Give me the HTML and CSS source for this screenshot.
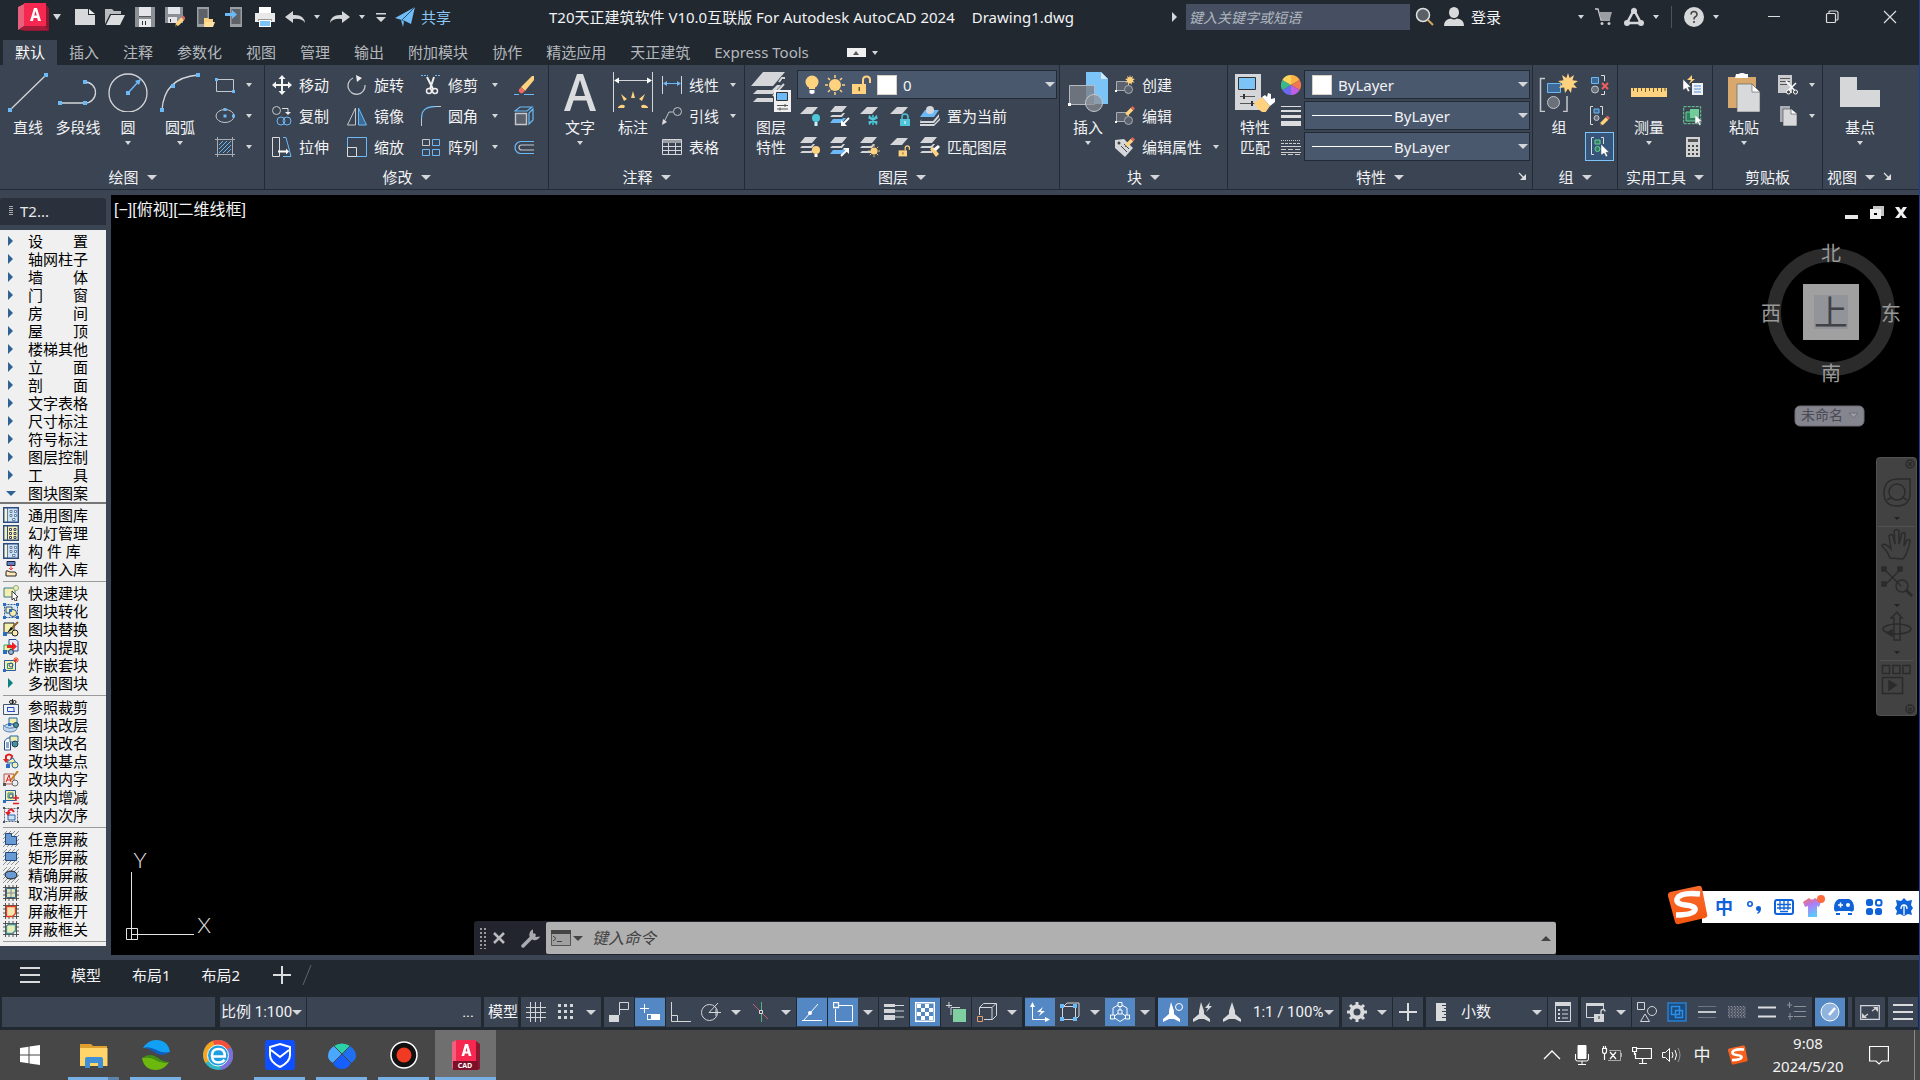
FILE: index.html
```html
<!DOCTYPE html>
<html lang="zh-CN">
<head>
<meta charset="utf-8">
<title>T20天正建筑软件 V10.0互联版</title>
<link rel="stylesheet" href="styles.css">
</head>
<body>
<svg class="defs" aria-hidden="true">
<defs>
<linearGradient id="shirtg" x1="0" y1="0" x2="0.4" y2="1"><stop offset="0" stop-color="#ff6a4a"/><stop offset=".45" stop-color="#b07cf5"/><stop offset="1" stop-color="#5cc8ff"/></linearGradient>
<linearGradient id="sog" x1="0" y1="0" x2="0" y2="1"><stop offset="0" stop-color="#f96a2c"/><stop offset="1" stop-color="#f4560f"/></linearGradient>
</defs>
<symbol id="logo" viewBox="0 0 32 30"><path d="M0 5L8 1v22l-8 5z" fill="#e8607c"/><path d="M4 28l3-5h20V2l4 4v22q0 1-1 1H6z" fill="#8c1730"/><path d="M6 1h22v23H6z" fill="#f7284f"/><path d="M6 24h21l3 4H1z" fill="#a51c3a"/><path d="M12 19L16 6h3l4 13h-3l-.8-3h-3.600L15 19zM16.200 13.500h2.600L17.500 9z" fill="#fff"/></symbol>
<symbol id="new" viewBox="0 0 20 20"><path d="M0 2h13v6h7v10H0z" fill="#d6d8da"/><path d="M14 2l6 5h-6z" fill="#eee"/></symbol>
<symbol id="open" viewBox="0 0 20 20"><path d="M0 2h7l2 2h7v3H5L0 17z" fill="#b9bbbd"/><path d="M6 8h14l-5 10H1z" fill="#dcdddf"/></symbol>
<symbol id="save" viewBox="0 0 20 20"><path d="M0 0h20v20H0z" fill="#8b8f96"/><path d="M4 0h12v9H4z" fill="#e3e5e8"/><path d="M4 12h12v8H4z" fill="#e9eaec"/><path d="M7 14h1v4H7zM10 14h1v4h-1z" fill="#333"/><path d="M4 9h12v1H4z" fill="#555"/></symbol>
<symbol id="pencil" viewBox="0 0 12 12"><path d="M0 12l1-4 6-6 3 3-6 6z" fill="#ffd27f"/><path d="M7 2l2-2 3 3-2 2z" fill="#e0655a"/><path d="M0 12l.7-2.500L2.500 11.300z" fill="#333"/></symbol>
<symbol id="saveas" viewBox="0 0 20 20"><path d="M0 0h18v16H0z" fill="#8b8f96"/><path d="M3 0h12v7H3zM3 10h9v6H3z" fill="#e3e5e8"/><path d="M5 12h1v3H5z" fill="#333"/><use href="#pencil" x="10" y="8" width="11" height="12"/></symbol>
<symbol id="mopen" viewBox="0 0 20 20"><path d="M2 0h12v20H2z" fill="#9a9da2"/><path d="M3.500 2h9v15h-9z" fill="#5d6168"/><path d="M9 11h4l1 1h4v7H9z" fill="#ffd27f"/><path d="M11 15h9l-2 5H9z" fill="#ffe0a0"/></symbol>
<symbol id="msave" viewBox="0 0 20 20"><path d="M5 0h12v20H5z" fill="#9a9da2"/><path d="M6.500 2h9v15h-9z" fill="#5d6168"/><path d="M0 6h7V3l5 4.500L7 12V9H0z" fill="#6cb9f7"/></symbol>
<symbol id="print" viewBox="0 0 20 20"><path d="M4 0h12v6H4z" fill="#fff"/><path d="M0 6h20v9H0z" fill="#e8e8e8"/><path d="M3 12h14v2H3z" fill="#999"/><path d="M4 13h12v7H4z" fill="#fff"/><path d="M5 14h10v5H5z" fill="#7cc3f8"/></symbol>
<symbol id="undo" viewBox="0 0 20 20"><path d="M0 10L8 4v4q11-1 12 8-3-5-12-4v4z" fill="#d4d6d9"/></symbol>
<symbol id="redo" viewBox="0 0 20 20"><path d="M20 10L12 4v4Q1 7 0 16q3-5 12-4v4z" fill="#d4d6d9"/></symbol>
<symbol id="qmore" viewBox="0 0 12 12"><path d="M1 2h10v1.500H1zM1 6h10L6 11z" fill="#d4d6d9"/></symbol>
<symbol id="share" viewBox="0 0 20 20"><path d="M0 11L20 0 16 17l-6-3zM6 13l3 1.500L8 20z" fill="#70bdf8"/><path d="M20 0L7 13" stroke="#2b4f70"/></symbol>
<symbol id="search" viewBox="0 0 20 20"><circle cx="8" cy="8" r="6.500" fill="#5a6068" stroke="#e0e0e0" stroke-width="1.500"/><path d="M13 13l5 5" stroke="#d9a75c" stroke-width="2"/></symbol>
<symbol id="user" viewBox="0 0 20 20"><ellipse cx="10" cy="5.500" rx="5" ry="5.500" fill="#d8dadc"/><path d="M0 19q0-7 7-7.500 3 2 6 0 7 .5 7 7.500z" fill="#d8dadc"/></symbol>
<symbol id="cart" viewBox="0 0 18 18"><path d="M0 1h3l3 11h9" fill="none" stroke="#c9cbce" stroke-width="1.300"/><path d="M4 4h13l-2 7H6z" fill="#9a9da2"/><circle cx="7" cy="15.500" r="1.500" fill="#ccc"/><circle cx="14" cy="15.500" r="1.500" fill="#ccc"/></symbol>
<symbol id="tri" viewBox="0 0 20 20"><path d="M10 3l7 13H3z" fill="none" stroke="#d4d6d9" stroke-width="2.500"/><circle cx="10" cy="4" r="3" fill="#d4d6d9"/><circle cx="3" cy="16" r="3" fill="#d4d6d9"/><circle cx="17" cy="16" r="3" fill="#d4d6d9"/></symbol>
<symbol id="help" viewBox="0 0 20 20"><circle cx="10" cy="10" r="10" fill="#d6d8da"/><path d="M7 7.500q0-3 3-3t3 3q0 1.500-2 2.500-1 .7-1 2.500" fill="none" stroke="#444" stroke-width="1.600"/><circle cx="10" cy="15" r="1.100" fill="#444"/></symbol>
<symbol id="wmin" viewBox="0 0 14 14"><path d="M1 6.500h12" stroke="#ddd"/></symbol>
<symbol id="wres" viewBox="0 0 14 14"><path d="M1.500 4.500q0-1 1-1h7q1 0 1 1v7q0 1-1 1h-7q-1 0-1-1zM4 3V2q0-1 1-1h6q2 0 2 2v6q0 1-1 1h-1" fill="none" stroke="#ddd" stroke-width="1.200"/></symbol>
<symbol id="wclose" viewBox="0 0 14 14"><path d="M1 1l12 12M13 1L1 13" stroke="#ddd" stroke-width="1.200"/></symbol>

<symbol id="line" viewBox="0 0 40 40"><path d="M2 38L38 3" stroke="#d4d6d9" stroke-width="1.300"/><path d="M0 36h4v4H0zM36 1h4v4h-4z" fill="#6cb9f7"/></symbol>
<symbol id="pline" viewBox="0 0 40 40"><path d="M2 31h25a10.500 10.500 0 0 0 0-21" fill="none" stroke="#d4d6d9" stroke-width="1.300"/><path d="M0 29h4v4H0zM25 29h4v4h-4zM25 8h4v4h-4z" fill="#6cb9f7"/></symbol>
<symbol id="circle" viewBox="0 0 40 40"><circle cx="20" cy="21" r="19" fill="none" stroke="#d4d6d9" stroke-width="1.300"/><path d="M20 21l10-11" stroke="#6cb9f7" stroke-width="1.500"/><path d="M18 19h4v4h-4zM27 9l6-2-2 6z" fill="#6cb9f7"/></symbol>
<symbol id="arc" viewBox="0 0 40 40"><path d="M2 38Q4 6 38 3" fill="none" stroke="#d4d6d9" stroke-width="1.300"/><path d="M0 36h4v4H0zM11 12h4v4h-4zM36 1h4v4h-4z" fill="#6cb9f7"/></symbol>
<symbol id="rect" viewBox="0 0 20 20"><path d="M1.500 4.500h17v12h-17z" fill="none" stroke="#c4c7cb"/><path d="M0 3h3v3H0zM17 15h3v3h-3z" fill="#6cb9f7"/></symbol>
<symbol id="ellipse" viewBox="0 0 20 20"><ellipse cx="10" cy="10" rx="9" ry="6.500" fill="none" stroke="#c4c7cb"/><path d="M8.500 2h3v3h-3zM8.500 8.500h3v3h-3zM17 8.500h3v3h-3z" fill="#6cb9f7"/></symbol>
<symbol id="hatch" viewBox="0 0 20 20"><path d="M0 2.500h20M0 17.500h20M2.500 0v20M17.500 0v20" stroke="#a9adb3"/><path d="M4 8l4-4M4 12l8-8M4 16L16 4M8 16l8-8M12 16l4-4" stroke="#6cb9f7"/></symbol>
<symbol id="move" viewBox="0 0 20 20"><path d="M10 0l3.500 4H11v5h5V6.500L20 10l-4 3.500V11h-5v5h2.500L10 20l-3.500-4H9v-5H4v2.500L0 10l4-3.500V9h5V4H6.500z" fill="#f4f4f4"/></symbol>
<symbol id="copy" viewBox="0 0 20 20"><circle cx="4.500" cy="4.500" r="4" fill="none" stroke="#c4c7cb"/><path d="M10 2.500h6v4" fill="none" stroke="#ddd"/><path d="M13 6h6l-3 3z" fill="#eee"/><circle cx="9" cy="15" r="4" fill="none" stroke="#6cb9f7"/><circle cx="15" cy="15" r="4" fill="none" stroke="#6cb9f7"/></symbol>
<symbol id="stretch" viewBox="0 0 20 20"><path d="M.5 19.500V.5h7v19z" fill="none" stroke="#ddd"/><path d="M11 .5h3l5 19H11" fill="none" stroke="#6cb9f7"/><path d="M6 13.500h8v-2l3 3-3 3v-2H6z" fill="#fff"/></symbol>
<symbol id="rotate" viewBox="0 0 20 20"><path d="M6 3a8.500 8.500 0 1 0 12 7" fill="none" stroke="#c4c7cb" stroke-width="1.300"/><path d="M9 0l6 3-5 4z" fill="#eee"/></symbol>
<symbol id="mirror" viewBox="0 0 20 20"><path d="M8.500 2v17h-8z" fill="none" stroke="#c4c7cb"/><path d="M11.500 2v17h8z" fill="#3c6c96" stroke="#6cb9f7"/></symbol>
<symbol id="scale" viewBox="0 0 20 20"><path d="M.5.500h19v19H.5z" fill="none" stroke="#6cb9f7"/><path d="M.5 10.500h9v9h-9z" fill="#3b4453" stroke="#ddd"/></symbol>
<symbol id="trim" viewBox="0 0 20 20"><path d="M0 .5h7M14 .5h6" stroke="#6cb9f7" stroke-dasharray="2 1"/><path d="M6 2l6 12M13 2L9 14" stroke="#eee" stroke-width="2"/><circle cx="8" cy="16" r="2.500" fill="none" stroke="#eee" stroke-width="1.500"/><circle cx="14" cy="16" r="2.500" fill="none" stroke="#eee" stroke-width="1.500"/></symbol>
<symbol id="fillet" viewBox="0 0 20 20"><path d="M.5 10v10M12 .5h8" stroke="#c4c7cb"/><path d="M.5 12Q.5.500 14 .5" fill="none" stroke="#6cb9f7" stroke-width="1.300"/></symbol>
<symbol id="array" viewBox="0 0 20 20"><path d="M1.500 2.500h7v6h-7z" fill="none" stroke="#c4c7cb"/><path d="M11.500 2.500h7v6h-7zM1.500 12.500h7v6h-7zM11.500 12.500h7v6h-7z" fill="none" stroke="#6cb9f7"/></symbol>
<symbol id="erase" viewBox="0 0 20 20"><path d="M0 19.500h5M10 19.500h10" stroke="#6cb9f7"/><path d="M7 12L18 1h2v4L11 16z" fill="#ffd27f"/><path d="M7 12l4 4-3 2.500q-4-1-3-4z" fill="#f06a62"/></symbol>
<symbol id="explode" viewBox="0 0 20 20"><path d="M1.500 7.500h11v11h-11z" fill="#5b626e" stroke="#c4c7cb" stroke-width="1.400"/><path d="M1 5l5-4h12l-5 4zM15 7l4-4v11l-4 4z" fill="none" stroke="#6cb9f7" stroke-width="1.200"/></symbol>
<symbol id="offset" viewBox="0 0 20 20"><path d="M20 4.500H7a6 6 0 0 0 0 12h13" fill="none" stroke="#6cb9f7" stroke-width="1.200"/><path d="M20 8H7.500a2.500 2.500 0 0 0 0 5H20" fill="none" stroke="#c4c7cb" stroke-width="1.200"/></symbol>
<symbol id="bigA" viewBox="0 0 40 40"><path d="M4 39L17 2h6l13 37h-6l-3.500-10.500h-13L10 39zM15 24h10L20 8z" fill="#dadcde"/></symbol>
<symbol id="dim" viewBox="0 0 40 40"><path d="M.5 0v40M39.500 0v40M2 8.500h36" stroke="#d4d6d9"/><path d="M1 8.500l5-3v6zM39 8.500l-5-3v6z" fill="#fff"/><path d="M18 26l2-7 2 7zM11 29l-3-7 6 5zM29 29l3-7-6 5zM5 35q4-4 7-1l-1 2H5zM35 35q-4-4-7-1l1 2h6z" fill="#ffd27f"/></symbol>
<symbol id="linear" viewBox="0 0 20 20"><path d="M.5 1v18M19.500 1v18" stroke="#d4d6d9"/><path d="M2 8.500h16" stroke="#6cb9f7"/><path d="M1 8.500l4-2.500v5zM19 8.500L15 6v5z" fill="#6cb9f7"/></symbol>
<symbol id="leader" viewBox="0 0 20 20"><circle cx="15.500" cy="5.500" r="4" fill="none" stroke="#c4c7cb"/><path d="M11 6H7l-5 10" fill="none" stroke="#c4c7cb"/><path d="M0 19l1-6 4 3z" fill="#ddd"/></symbol>
<symbol id="table" viewBox="0 0 20 20"><path d="M.5 2.500h19v15H.5z" fill="none" stroke="#d4d6d9"/><path d="M1 3h18v3H1z" fill="#999da4"/><path d="M0 9.500h20M0 13.500h20M6.500 6v12M13.500 6v12" stroke="#d4d6d9"/></symbol>

<symbol id="ly1" viewBox="0 0 20 20"><path d="M7 1h11l-6 7H0z" fill="#d4d6d9"/></symbol>
<symbol id="ly3" viewBox="0 0 20 20"><path d="M5 0h12l-5 6H0zM2 9l-2 2h12l3-4h-2l-2 2zM2 14l-2 2h12l3-4h-2l-2 2z" fill="#d4d6d9"/></symbol>
<symbol id="ly3b" viewBox="0 0 20 20"><path d="M5 0h12l-5 6H0zM2 9l-2 2h12l3-4h-2l-2 2z" fill="#d4d6d9"/><path d="M3 13l-3 4h12l4-5h-3l-1 1z" fill="#6cb9f7"/></symbol>
<symbol id="bulb" viewBox="0 0 14 20"><circle cx="7" cy="7" r="6.500" fill="#ffd27f"/><path d="M4 12h6v2H4z" fill="#ffd27f"/><path d="M4.500 15h5v3q-2.500 2-5 0z" fill="#fff"/></symbol>
<symbol id="sun" viewBox="0 0 20 20"><circle cx="10" cy="10" r="6" fill="#ffd27f"/><path d="M10 0v3M10 17v3M0 10h3M17 10h3M3 3l2 2M15 15l2 2M17 3l-2 2M5 15l-2 2" stroke="#ffd27f" stroke-width="1.500"/></symbol>
<symbol id="unlock" viewBox="0 0 20 20"><path d="M1 9h14v10H1z" fill="#ffd27f"/><path d="M12 9V5q0-3.500 3.500-3.500T19 5v3" fill="none" stroke="#ffd27f" stroke-width="2"/><path d="M7.500 12h1.500v4H7.500z" fill="#6b5a30"/></symbol>
<symbol id="layprop" viewBox="0 0 40 40"><path d="M12 0h22L22 14H0zM6 18l-4 4h20l8-9h-4l-5 5zM6 26l-4 4h20v-4z" fill="#d4d6d9"/><path d="M34 6h-3l-3 4M33 12L22 24" stroke="#d4d6d9" stroke-width="2"/><path d="M23 18h17v22H23z" fill="#f0f0f0"/><path d="M25.500 20.500h11v8h-11z" fill="#6cb9f7" stroke="#333"/><path d="M26 33.500h11M26 37h11M34 32v3M29 35.500v3" stroke="#555"/></symbol>
<symbol id="lyoff" viewBox="0 0 20 20"><use href="#ly1"/><circle cx="16" cy="12" r="4" fill="#4ec5d8"/><path d="M14.500 16h3v4h-3z" fill="#c9f0f5"/></symbol>
<symbol id="lyiso" viewBox="0 0 20 20"><use href="#ly3b"/><path d="M11 20v-6l6 6z" fill="#fff"/><path d="M19 12l-6 6" stroke="#fff" stroke-width="2"/></symbol>
<symbol id="lyfrz" viewBox="0 0 20 20"><use href="#ly1"/><path d="M13 9v10M8.500 11.500l9 5M17.500 11.500l-9 5M9 9.500l8 9M17 9.500l-8 9" stroke="#4ec5d8" stroke-width="1.500"/></symbol>
<symbol id="lylock" viewBox="0 0 20 20"><use href="#ly1"/><path d="M10 13h10v7H10z" fill="#4ec5d8"/><path d="M12 13v-2q0-3 3-3t3 3v2" fill="none" stroke="#4ec5d8" stroke-width="1.500"/><path d="M14.500 15h1v3h-1z" fill="#fff"/></symbol>
<symbol id="lycur" viewBox="0 0 20 20"><path d="M5 4h14l-5 7H0z" fill="#6cb9f7"/><circle cx="10" cy="4" r="4" fill="#d4d6d9"/><path d="M2 13l-2 2h13l6-7v3l-5 6H0v-1l2-3M0 20h14l6-6v-2l-6 6H0z" fill="#d4d6d9"/></symbol>
<symbol id="lyon" viewBox="0 0 20 20"><use href="#ly3"/><circle cx="16" cy="13" r="4" fill="#ffd27f"/><path d="M14.500 17h3v3h-3z" fill="#fff"/></symbol>
<symbol id="lyun" viewBox="0 0 20 20"><use href="#ly3b"/><path d="M11 19l6-6" stroke="#fff" stroke-width="2"/><path d="M13 11h6v6z" fill="#fff"/></symbol>
<symbol id="lythaw" viewBox="0 0 20 20"><use href="#ly3"/><use href="#sun" x="8" y="8" width="12" height="12"/></symbol>
<symbol id="lyunl" viewBox="0 0 20 20"><use href="#ly1"/><use href="#unlock" x="8" y="8" width="12" height="12"/></symbol>
<symbol id="lymat" viewBox="0 0 20 20"><use href="#ly3"/><path d="M10 12l3-2 6 7-3 3z" fill="#ffd27f"/><path d="M13 12l5-4 2 2-4 4z" fill="#fff"/></symbol>

<symbol id="insert" viewBox="0 0 40 40"><path d="M18 0h15l7 7v25H18z" fill="#7cc3f8"/><path d="M33 0v7h7z" fill="#cfe8fc"/><path d="M1.500 13.500h25v19h-25z" fill="#7a7f87" fill-opacity=".8" stroke="#b6b9be"/><circle cx="26" cy="31" r="8.500" fill="#8b8f96" fill-opacity=".7" stroke="#c4c7cb"/><path d="M0 31h3v3H0z" fill="#fff"/></symbol>
<symbol id="blk" viewBox="0 0 20 20"><path d="M1.500 6.500h12v9h-12z" fill="#5b626e" stroke="#a9adb3"/><circle cx="13.500" cy="14.500" r="4" fill="#5b626e" stroke="#a9adb3"/><path d="M0 15h2v2H0z" fill="#fff"/></symbol>
<symbol id="star" viewBox="0 0 20 20"><path d="M10 0l1.600 5L16 2l-1.500 5.200L20 8l-4.500 3 3.500 4-5.200-.6L13 20l-3-4.300L7 20l-.8-5.600L1 15l3.500-4L0 8l5.500-.8L4 2l4.400 3z" fill="#ffd27f"/></symbol>
<symbol id="bcreate" viewBox="0 0 20 20"><use href="#blk"/><use href="#star" x="10" y="0" width="10" height="10"/></symbol>
<symbol id="bedit" viewBox="0 0 20 20"><use href="#blk"/><use href="#pencil" x="10" y="0" width="10" height="10"/></symbol>
<symbol id="battr" viewBox="0 0 20 20"><path d="M0 3l9-1 9 9-8 9L0 11z" fill="#d4d6d9"/><circle cx="4" cy="6" r="1.500" fill="#444"/><path d="M6 9l6 6M9 7l5 5" stroke="#444"/><use href="#pencil" x="10" y="0" width="10" height="10"/></symbol>
<symbol id="match" viewBox="0 0 40 40"><path d="M0 2h26v36H0z" fill="#d4d6d9"/><path d="M3.500 5.500h17v12h-17z" fill="#7cc3f8" stroke="#333"/><path d="M5 24.500h15M5 31.500h15" stroke="#555"/><path d="M8 22h2v5H8zM16 29h2v5h-2z" fill="#333"/><path d="M19 31l8-6 8 9-5 7q-6-1-11-10z" fill="#ffd27f"/><path d="M27 25l3-2 2 2 1-4 3 1v5l4-1v4l-5 4z" fill="#fff"/></symbol>
<symbol id="wheel" viewBox="0 0 20 20"><path d="M10 10V0a10 10 0 0 1 8.700 5z" fill="#ffb347"/><path d="M10 10L18.700 5a10 10 0 0 1 0 10z" fill="#f07850"/><path d="M10 10l8.700 5A10 10 0 0 1 10 20z" fill="#c060e0"/><path d="M10 10v10a10 10 0 0 1-8.700-5z" fill="#6a6af0"/><path d="M10 10l-8.700 5a10 10 0 0 1 0-10z" fill="#3cb88a"/><path d="M10 10L1.300 5A10 10 0 0 1 10 0z" fill="#ffd75e"/></symbol>
<symbol id="lwt" viewBox="0 0 20 20"><path d="M0 0h20v1H0zM0 4h20v2H0zM0 9h20v3H0zM0 15h20v5H0z" fill="#dcdddf"/></symbol>
<symbol id="ltp" viewBox="0 0 20 20"><path d="M0 3.500h20" stroke="#ccc" stroke-dasharray="1 1"/><path d="M0 6.500h20" stroke="#ccc" stroke-dasharray="3 1"/><path d="M0 9.500h20M0 15.500h20" stroke="#ccc"/><path d="M0 12.500h20M0 17.500h20" stroke="#ccc" stroke-dasharray="5 2"/></symbol>
<symbol id="launch" viewBox="0 0 10 10"><path d="M1 1l5 5" stroke="#ddd" stroke-width="1.300"/><path d="M8 2v6H2z" fill="#ddd"/></symbol>
<symbol id="group" viewBox="0 0 40 40"><path d="M6 6.500H1.500v33H6M24 39.500h4V24" fill="none" stroke="#c4c7cb" stroke-width="1.500"/><path d="M8.500 11.500h13v9h-13z" fill="#3d6a96" stroke="#6cb9f7"/><circle cx="14.500" cy="30.500" r="6" fill="#6b717b" stroke="#c4c7cb"/><use href="#star" x="19" y="1" width="20" height="20"/></symbol>
<symbol id="ungrp" viewBox="0 0 20 20"><path d="M1.500 2.500h7v6h-7z" fill="#3d6a96" stroke="#6cb9f7"/><circle cx="5" cy="14.500" r="3.500" fill="#6b717b" stroke="#c4c7cb"/><path d="M11 .5h3.500V6M14.500 16v3.500H11" fill="none" stroke="#ddd"/><path d="M12 8l6 6M18 8l-6 6" stroke="#f0605a" stroke-width="2"/></symbol>
<symbol id="gedit" viewBox="0 0 20 20"><path d="M3 .5H.5v18H3M10 .5h2.500V9" fill="none" stroke="#ddd"/><path d="M4 3h5v4H4z" fill="#3d6a96" stroke="#6cb9f7"/><circle cx="6.500" cy="12" r="2.500" fill="#6b717b" stroke="#c4c7cb"/><use href="#pencil" x="10" y="9" width="10" height="11"/></symbol>
<symbol id="cursor" viewBox="0 0 10 14"><path d="M0 0l9 9H5.500l2 4-2 1-2-4L0 12z" fill="#fff" stroke="#445" stroke-width=".5"/></symbol>
<symbol id="gsel" viewBox="0 0 20 20"><path d="M4 .5H1.500v17H4M11 .5h2.500V7" fill="none" stroke="#ddd"/><path d="M5 3h5v4H5z" fill="#2e7f62" stroke="#6fcf97"/><circle cx="7.500" cy="12" r="2.500" fill="#2e7f62" stroke="#6fcf97"/><use href="#cursor" x="11" y="7" width="9" height="13"/></symbol>
<symbol id="ruler" viewBox="0 0 40 40"><path d="M2 16h36v9H2z" fill="#ffd27f"/><path d="M4.500 16v3M8.500 16v4M12.500 16v3M16.500 16v4M20.500 16v3M24.500 16v4M28.500 16v3M32.500 16v4M36 16v3" stroke="#6b5a30"/></symbol>
<symbol id="qsel" viewBox="0 0 20 20"><path d="M9 0L4 5h4L6 9l6-5H9z" fill="#ffd27f"/><path d="M9 8h11v12H9z" fill="#f0f0f0"/><path d="M11 11h7M11 14h7M11 17h7" stroke="#4a90e2"/><use href="#cursor" x="0" y="4" width="9" height="13"/></symbol>
<symbol id="sall" viewBox="0 0 20 20"><path d="M.7.700h17v17H.7z" fill="none" stroke="#6fcf97" stroke-dasharray="3 1"/><path d="M3 6h10v9H3z" fill="#2e7f62" stroke="#6fcf97"/><path d="M7 3h9v9H7z" fill="#6fcf97"/><use href="#cursor" x="12" y="8" width="8" height="12"/></symbol>
<symbol id="calc" viewBox="0 0 20 20"><path d="M3 0h14v20H3z" fill="#d0d2d4"/><path d="M5 2h10v3H5z" fill="#555"/><path d="M5 8h2v2H5zM9 8h2v2H9zM13 8h2v2h-2zM5 12h2v2H5zM9 12h2v2H9zM13 12h2v2h-2zM5 16h2v2H5zM9 16h2v2H9zM13 16h2v2h-2z" fill="#444"/></symbol>
<symbol id="paste" viewBox="0 0 40 40"><path d="M4 5h28v31H4z" fill="#d9a86c"/><path d="M12 2h3q0-1 3-1t3 1h3v4H11z" fill="#fff"/><path d="M13 12h15l8 8v20H13z" fill="#d8d9db" stroke="#555" stroke-width=".6"/><path d="M28 12v8h8z" fill="#fff" stroke="#555" stroke-width=".6"/></symbol>
<symbol id="cut" viewBox="0 0 20 20"><path d="M0 0h14v18H0z" fill="#c9cbce"/><path d="M2 3.500h10M2 6.500h10M2 9.500h7" stroke="#555"/><path d="M8 6l9 10M18 8l-8 8" stroke="#fff" stroke-width="1.500"/><circle cx="10.500" cy="17" r="2" fill="#444" stroke="#fff"/><circle cx="17.500" cy="17" r="2" fill="#444" stroke="#fff"/></symbol>
<symbol id="cpy" viewBox="0 0 20 20"><path d="M2 0h10v16H2z" fill="#a9adb3"/><path d="M5 3h8l6 5v12H5z" fill="#d8d9db" stroke="#444" stroke-width=".6"/><path d="M13 3v5h6" fill="#fff" stroke="#444" stroke-width=".6"/></symbol>
<symbol id="base" viewBox="0 0 40 40"><path d="M0 5h17v13h23v17H0z" fill="#d6d7d9"/></symbol>

<symbol id="s-r" viewBox="0 0 16 16"><path d="M5 3v10l5-5z" fill="#2f6294"/></symbol>
<symbol id="s-d" viewBox="0 0 16 16"><path d="M3 6h10l-5 5z" fill="#2f6294"/></symbol>
<symbol id="s-g" viewBox="0 0 16 16"><path d="M5 3v10l5-5z" fill="#0f8080"/></symbol>
<symbol id="s-lib" viewBox="0 0 16 16"><path d="M.7.700h14.600v14.600H.7z" fill="#cfe2f3" stroke="#2a4c80" stroke-width="1.400"/><path d="M2 2h2v12H2z" fill="#fff3c0"/><path d="M4.500 1v14" stroke="#2a4c80" stroke-width=".7"/><path d="M7 3.500h2v2H7zM11.500 3.500h2v2h-2zM7 7.500h2v2H7zM11.500 7.500h2v2h-2zM9.500 11.500h2.500v2H9.500z" fill="#fff" stroke="#456a98" stroke-width=".8"/></symbol>
<symbol id="s-film" viewBox="0 0 16 16"><path d="M.7.700h14.600v14.600H.7z" fill="#f5f0b8" stroke="#2a4c80" stroke-width="1.400"/><path d="M4.500 1v14" stroke="#2a4c80"/><path d="M6.500 3.500h2v2h-2zM11 3.500h2v2h-2zM6.500 7.500h2v2h-2zM11 7.500h2v2h-2zM6.500 11.500h2v2h-2zM11 11.500h2v2h-2z" fill="#fff" stroke="#445"/></symbol>
<symbol id="s-in" viewBox="0 0 16 16"><path d="M4 .5h8v4H4z" fill="#5b84c4" stroke="#224"/><path d="M8 3v6M6 7l2 2 2-2" stroke="#e33" fill="none"/><path d="M3 15v-4q0-2 2-1l2 1h5q2 0 1 4z" fill="#ffe9b8" stroke="#222"/></symbol>
<symbol id="s-quick" viewBox="0 0 16 16"><path d="M1 3h11v9H1z" fill="#f3efae" stroke="#3a7a8a"/><circle cx="13" cy="3" r="2.500" fill="#f3efae" stroke="#8a8"/><path d="M9 6l6 6-2 .5 1 3-2 .5-1-3-2 2z" fill="#fff" stroke="#111" stroke-width=".8"/></symbol>
<symbol id="s-conv" viewBox="0 0 16 16"><path d="M1.500 1.500h13v13h-13z" fill="#dce8f5" stroke="#2a5ca0" stroke-dasharray="2 1"/><path d="M3 4h6v6H3z" fill="#f3efae" stroke="#2a4c80"/><circle cx="10" cy="10" r="3.500" fill="#f3efae" stroke="#2a4c80"/><path d="M0 0h3v3H0zM13 0h3v3h-3zM0 13h3v3H0zM13 13h3v3h-3zM6 6h3v3H6z" fill="#2a6cc0"/></symbol>
<symbol id="s-rep" viewBox="0 0 16 16"><path d="M1 2h10v10H1z" fill="#f3efae" stroke="#222"/><path d="M15 1L8 8" stroke="#8a6030" stroke-width="2"/><path d="M8 6l2 2-6 4z" fill="#111"/><circle cx="12" cy="12" r="3" fill="#fbe9b0" stroke="#222"/><path d="M0 11h4v4H0z" fill="#2a6cc0"/></symbol>
<symbol id="s-ext" viewBox="0 0 16 16"><path d="M6 .5h7l2 2V12H6z" fill="#e8eefb" stroke="#224a90"/><path d="M1 6h7v6H1z" fill="#f3efae" stroke="#2a6"/><path d="M4 6h5V3l5 4.500L9 12V9H4z" fill="#f02020"/><circle cx="8" cy="13" r="2.500" fill="#9cb8d0" stroke="#235"/><path d="M0 11h4v4H0z" fill="#2a6cc0"/></symbol>
<symbol id="s-exp" viewBox="0 0 16 16"><path d="M1.500 3.500h11v10h-11z" fill="#f3efae" stroke="#2a5ca0"/><path d="M4.500 6.500h5v5h-5z" fill="none" stroke="#3a8a6a"/><circle cx="8" cy="8" r="2" fill="none" stroke="#2a5ca0"/><path d="M13 0v6M10 3h6M11 1l4 4M15 1l-4 4" stroke="#f04020"/><path d="M0 12h3v3H0z" fill="#2a6cc0"/></symbol>
<symbol id="s-clip" viewBox="0 0 16 16"><path d="M.5 5.500h15v10H.5z" fill="#eef3fa" stroke="#456"/><path d="M4 8.500h7V13M4.500 8v4.500H12" fill="none" stroke="#2a4cc0"/><circle cx="8" cy="3" r="1.500" fill="none" stroke="#222"/><circle cx="11.500" cy="3" r="1.500" fill="none" stroke="#222"/><path d="M9.500 0v5" stroke="#222"/></symbol>
<symbol id="s-lay" viewBox="0 0 16 16"><ellipse cx="7" cy="11" rx="7" ry="4" fill="#c4d6ea" stroke="#5b84b4"/><path d="M0 8q6 6 14 1" fill="none" stroke="#5b84b4"/><path d="M6 1h8v6H6z" fill="#f3efae" stroke="#26a"/><circle cx="13" cy="8" r="2.500" fill="#4a90a0" stroke="#245"/><path d="M5 6h3v3H5z" fill="#2a6cc0"/></symbol>
<symbol id="s-name" viewBox="0 0 16 16"><path d="M1.500 6l3-3h3v12h-6z" fill="#fff" stroke="#224a90"/><path d="M3 8h3M3 10h3M3 12h3" stroke="#224a90"/><path d="M7 1h8v6H7z" fill="#f3efae" stroke="#26a"/><circle cx="12" cy="9" r="3" fill="#4a90a0" stroke="#245"/></symbol>
<symbol id="s-base" viewBox="0 0 16 16"><path d="M3 6V3q3-3 6 0l-1 4" fill="none" stroke="#e02020" stroke-width="2"/><path d="M0 6h6L3 10z" fill="#e02020"/><path d="M5 8l5-3 3 5H4z" fill="#f3efae" stroke="#26a"/><circle cx="12" cy="12" r="3" fill="#f3efae" stroke="#26a"/><path d="M3 11h4v4H3z" fill="#2a6cc0"/></symbol>
<symbol id="s-txt" viewBox="0 0 16 16"><path d="M1 3h10v10H1z" fill="#fbe9e0" stroke="#a55"/><path d="M3 11l3-7 2 7M4 9h4" fill="none" stroke="#d02020"/><path d="M15 0L8 9" stroke="#c08020" stroke-width="2"/><circle cx="12" cy="12" r="3" fill="#eee" stroke="#666"/><path d="M0 12h3v3H0z" fill="#555"/></symbol>
<symbol id="s-inc" viewBox="0 0 16 16"><path d="M2.500 1.500h10v10h-10z" fill="#f3efae" stroke="#2a5ca0"/><path d="M5 4h5v5H5z" fill="none" stroke="#3a8a6a"/><circle cx="8" cy="7" r="2" fill="none" stroke="#2a5ca0"/><path d="M13 6v6M10 9h6M10 14.500h6" stroke="#e02020" stroke-width="1.500"/><path d="M0 11h3v3H0z" fill="#2a6cc0"/></symbol>
<symbol id="s-ord" viewBox="0 0 16 16"><path d="M1.500 1.500h13v13h-13z" fill="#eef" stroke="#666" stroke-dasharray="2 1"/><path d="M5 8h7v5H5z" fill="#cfe2f3" stroke="#26a"/><path d="M5 5q3-5 6 0" fill="none" stroke="#e02020" stroke-width="2"/><path d="M2 5h6L5 9z" fill="#e02020"/><path d="M0 0h2v2H0zM14 0h2v2h-2zM0 14h2v2H0zM14 14h2v2h-2z" fill="#456"/></symbol>
<symbol id="s-h" viewBox="0 0 16 16"><path d="M0 4l4-4M0 8l8-8M0 12L12 0M0 16L16 0M4 16L16 4M8 16l8-8M12 16l4-4" stroke="#777" stroke-width=".8"/></symbol>
<symbol id="s-any" viewBox="0 0 16 16"><use href="#s-h"/><path d="M2.500 2.500h6v3h5v8h-11z" fill="#6a9ad4" stroke="#224a80"/></symbol>
<symbol id="s-rec" viewBox="0 0 16 16"><use href="#s-h"/><path d="M2.500 3.500h11v8h-11z" fill="#6a9ad4" stroke="#224a80"/></symbol>
<symbol id="s-ell" viewBox="0 0 16 16"><use href="#s-h"/><ellipse cx="8" cy="8" rx="6" ry="4" fill="#6a9ad4" stroke="#111"/></symbol>
<symbol id="s-x" viewBox="0 0 16 16"><path d="M0 2.500h16M0 6h16M0 10h16M0 13.500h16M2.500 0v16M6 0v16M10 0v16M13.500 0v16" stroke="#444" stroke-width=".9"/></symbol>
<symbol id="s-can" viewBox="0 0 16 16"><use href="#s-x"/><path d="M3.500 3.500h9v9h-9z" fill="#dfe6b4" stroke="#3a6a8a"/><path d="M8 4v8M4 8h8" stroke="#889"/></symbol>
<symbol id="s-on" viewBox="0 0 16 16"><use href="#s-x"/><path d="M3.500 3.500h9v7l-3 3h-6z" fill="#f5e6b4" stroke="#e04020" stroke-width="1.300"/></symbol>
<symbol id="s-off" viewBox="0 0 16 16"><use href="#s-x"/><path d="M3.500 5l2-1.500h7v6l-3 3h-6z" fill="#e6f0b4" stroke="#4a8a9a" stroke-width="1.300"/></symbol>

<symbol id="wrench" viewBox="0 0 20 20"><path d="M2 18L13 7" stroke="#a9abb0" stroke-width="3.500" stroke-linecap="round"/><path d="M12 1.500a5.500 5.500 0 1 0 7 7l-4 .5-3-3z" fill="#a9abb0"/></symbol>
<symbol id="cmd" viewBox="0 0 20 20"><path d="M.5 2.500h19v15H.5z" fill="#a0a0a0" stroke="#555"/><path d="M0 2h20v4H0z" fill="#444"/><path d="M2 8l3 2.500L2 13M6 13.500h5" fill="none" stroke="#444"/></symbol>

<symbol id="t-grid" viewBox="0 0 20 20"><path d="M0 5.500h20M0 10.500h20M0 15.500h20M4.500 0v20M9.500 0v20M14.500 0v20" stroke="#d4d6d9"/></symbol>
<symbol id="t-dots" viewBox="0 0 20 20"><path d="M2 2h3v3H2zM8 2h3v3H8zM14 2h3v3h-3zM2 8h3v3H2zM8 8h3v3H8zM14 8h3v3h-3zM2 14h3v3H2zM8 14h3v3H8zM14 14h3v3h-3z" fill="#d4d6d9"/></symbol>
<symbol id="t-inf" viewBox="0 0 20 20"><path d="M0 13h10v7H0z" fill="#d4d6d9"/><path d="M10.500 13V.5h9v7h-9" fill="none" stroke="#d4d6d9"/></symbol>
<symbol id="t-dyn" viewBox="0 0 20 20"><path d="M0 6.500h9M4.500 2v9" stroke="#fff"/><path d="M7 12h13v6H7z" fill="#fff"/><path d="M8 13h3v4H8z" fill="#5488c4"/></symbol>
<symbol id="t-ortho" viewBox="0 0 20 20"><path d="M.5 0v19.500H20M.5 13.500h6v6" fill="none" stroke="#d4d6d9"/></symbol>
<symbol id="t-polar" viewBox="0 0 20 20"><circle cx="8.500" cy="10.500" r="8" fill="none" stroke="#d4d6d9"/><path d="M8 10.500h12M8 10.500L17 1M15 7v7" stroke="#d4d6d9"/></symbol>
<symbol id="t-iso" viewBox="0 0 20 20"><path d="M2 2l15 15" stroke="#c06070"/><path d="M10.500 0v20" stroke="#50b080"/><path d="M8.500 8.500h3v3h-3z" fill="#3b4453" stroke="#ddd"/></symbol>
<symbol id="t-trk" viewBox="0 0 20 20"><path d="M0 18.500h20M2 18L16 2" stroke="#fff" fill="none"/><circle cx="8" cy="11" r="2" fill="#fff"/></symbol>
<symbol id="t-osn" viewBox="0 0 20 20"><path d="M5 3.500h14.500v16h-17V7" fill="none" stroke="#fff"/><path d="M.5.500h5v5h-5z" fill="none" stroke="#fff" stroke-width="1.300"/></symbol>
<symbol id="t-lw" viewBox="0 0 20 20"><path d="M0 3.500h20M0 9h20M0 15h20" stroke="#d4d6d9"/><path d="M0 2h11v3H0zM0 7h11v4H0zM0 13h11v5H0z" fill="#d4d6d9"/></symbol>
<symbol id="t-tr" viewBox="0 0 20 20"><path d="M.7.700h18.600v18.600H.7z" fill="none" stroke="#fff" stroke-width="1.400"/><path d="M2 2h4v4H2zM10 2h4v4h-4zM6 6h4v4H6zM14 6h4v4h-4zM2 10h4v4H2zM10 10h4v4h-4zM6 14h4v4H6zM14 14h4v4h-4z" fill="#fff"/></symbol>
<symbol id="t-cyc" viewBox="0 0 20 20"><path d="M0 3.500h6M3 0v6M5 13V5.500h9" stroke="#d4d6d9" fill="none"/><path d="M7 7h13v13H7z" fill="#80cfa0"/></symbol>
<symbol id="t-3d" viewBox="0 0 20 20"><path d="M2.500 13V5.500l4-4h13v12l-4 4H7M2.500 5.500h12.500v12M15 5.500l4-4" fill="none" stroke="#d4d6d9"/><path d="M.5 14.500h5v5h-5z" fill="#3b4453" stroke="#e0a070"/></symbol>
<symbol id="t-ucs" viewBox="0 0 20 20"><path d="M2.500 4v13.500H16" fill="none" stroke="#fff"/><path d="M0 5l2.500-5L5 5zM15 15l5 2.500L15 20zM13 5l-6 5h4l-2 4 6-5h-4z" fill="#fff"/></symbol>
<symbol id="t-flt" viewBox="0 0 20 20"><path d="M2.500 4.500h13v13h-13zM4 4l3-3h12v13l-4 4" fill="none" stroke="#d4d6d9"/><path d="M0 2h4v4H0zM13 2h4v4h-4zM0 15h4v4H0zM13 15h4v4h-4z" fill="#6cb9f7"/></symbol>
<symbol id="t-giz" viewBox="0 0 20 20"><path d="M10 2l7 4v9l-7 4.500L3 15V6zM10 3v7l-7 5M10 10l7 5" fill="none" stroke="#fff"/><path d="M8 .5h4v4H8zM8 8h4v4H8zM.5 13h4v4h-4zM15.500 13h4v4h-4z" fill="#5488c4" stroke="#fff"/></symbol>
<symbol id="t-ann" viewBox="0 0 20 20"><path d="M9 0l3 9v3l6 5v3l-6-3H6l-6 3v-3l6-5V9z" fill="#d8dadc"/></symbol>
<symbol id="t-a1" viewBox="0 0 20 20"><path d="M8 0l3 9v3l6 5v3l-6-3H6l-6 3v-3l6-5V9z" fill="#fff"/><circle cx="16" cy="5" r="3.500" fill="none" stroke="#fff"/></symbol>
<symbol id="t-a2" viewBox="0 0 20 20"><path d="M8 0l3 9v3l6 5v3l-6-3H6l-6 3v-3l6-5V9zM17 0l-5 6h3l-2 4 6-6h-3z" fill="#d8dadc"/></symbol>
<symbol id="t-gear" viewBox="0 0 20 20"><circle cx="10" cy="10" r="5.500" fill="none" stroke="#d8dadc" stroke-width="4"/><path d="M10 0v4M10 16v4M0 10h4M16 10h4M3 3l3 3M14 14l3 3M17 3l-3 3M6 14l-3 3" stroke="#d8dadc" stroke-width="3"/></symbol>
<symbol id="plus" viewBox="0 0 20 20"><path d="M10 1v18M1 10h18" stroke="#dcdddf" stroke-width="2"/></symbol>
<symbol id="t-rul" viewBox="0 0 20 20"><path d="M5 1h10v2h-4v1h4v2h-2v1h2v2h-4v1h4v2h-2v1h2v2h-4v1h4v3H5z" fill="#d8dadc"/></symbol>
<symbol id="t-prop" viewBox="0 0 20 20"><path d="M2.500.500h15v19h-15z" fill="none" stroke="#d4d6d9"/><path d="M2 0h16v4H2z" fill="#d4d6d9"/><path d="M5 7h2v2H5zM5 11h2v2H5zM5 15h2v2H5z" fill="#d4d6d9"/><path d="M9 8h6M9 12h6M9 16h6" stroke="#d4d6d9"/></symbol>
<symbol id="t-lock" viewBox="0 0 20 20"><path d="M8 15.500H.5v-14h17V7" fill="none" stroke="#d4d6d9"/><path d="M0 1h18v3H0zM8 12h10v8H8z" fill="#d4d6d9"/><path d="M15 12V9.500q0-2 2-2t2 2" fill="none" stroke="#d4d6d9" stroke-width="1.300"/><path d="M12.500 14h1v3h-1z" fill="#333"/></symbol>
<symbol id="t-shp" viewBox="0 0 20 20"><path d="M.5.500h7v7h-7zM8 12l4.500 7.500h-9z" fill="none" stroke="#d4d6d9"/><circle cx="15" cy="9" r="4.500" fill="none" stroke="#d4d6d9"/></symbol>
<symbol id="t-iso2" viewBox="0 0 20 20"><path d="M1 1h18v18H1z" fill="#1d4b7c" stroke="#2a7fd0" stroke-width="1.500"/><path d="M4.500 4.500h8v8h-8zM8.500 8.500h7v7h-7z" fill="none" stroke="#2a8fe8" stroke-width="1.500"/></symbol>
<symbol id="t-l1" viewBox="0 0 20 20"><path d="M1 4.500h18M1 15.500h18" stroke="#6d7481"/><path d="M1 10h18" stroke="#c4c7cb" stroke-width="2"/></symbol>
<symbol id="t-l2" viewBox="0 0 20 20"><path d="M1 4h18v12H1z" fill="#4c5463"/><path d="M1 4.500h18M1 7.500h18M1 10.500h18M1 13.500h18M2 6h18M2 9h18M2 12h18M2 15h18" stroke="#8b9099" stroke-dasharray="1 2"/></symbol>
<symbol id="t-l3" viewBox="0 0 20 20"><path d="M1 5.500h18M1 14.500h18" stroke="#dcdddf" stroke-width="2"/></symbol>
<symbol id="t-l4" viewBox="0 0 20 20"><path d="M0 3h5M2.500 0v6M7 4.500h12M7 9.500h12M7 14.500h12M1 14.500h5M3 11v7" stroke="#8b9099"/></symbol>
<symbol id="t-hw" viewBox="0 0 20 20"><circle cx="10" cy="10" r="9" fill="#8fb4dd" stroke="#fff"/><path d="M9 13l6-7" stroke="#fff" stroke-width="2.500"/></symbol>
<symbol id="t-full" viewBox="0 0 20 20"><path d="M.7 3.700h18.600v13.600H.7z" fill="none" stroke="#d4d6d9" stroke-width="1.200"/><path d="M13 5h5v5zM2 11v5h5z" fill="#d4d6d9"/><path d="M12 9l4-3M4 15l4-3" stroke="#d4d6d9" stroke-width="1.200"/></symbol>
<symbol id="burger" viewBox="0 0 20 20"><path d="M0 3h20M0 10h20M0 17h20" stroke="#d8dadc" stroke-width="2"/></symbol>

<symbol id="k-win" viewBox="0 0 20 20"><path d="M0 3l8.500-1.200V9.500H0zM9.500 1.600L20 0v9.500H9.500zM0 10.500h8.500v7.700L0 17zM9.500 10.500H20V20L9.500 18.400z" fill="#fff"/></symbol>
<symbol id="k-fold" viewBox="0 0 30 30"><path d="M1 4h11l2 2h14v4H1z" fill="#e0a030"/><path d="M1 8h27.500v18H1z" fill="#ffd56a"/><path d="M6 28v-9q0-2 2-2h14q2 0 2 2v9h-5v-5h-8v5z" fill="#3f8fd6"/></symbol>
<symbol id="k-wps" viewBox="0 0 30 30"><path d="M2 8Q7 0 15 0q12 0 14 12-6 2-12-1Q9 6 2 8z" fill="#12a0f5"/><path d="M2 8q7-2 15 3 6 3 12 1-8 6-16 0Q8 8 2 8z" fill="#0a5fc8"/><path d="M28 22q-5 8-13 8Q3 30 1 18q6-2 12 1 8 5 15 3z" fill="#6db80c"/><path d="M28 22q-7 2-15-3-6-3-12-1 8-6 16 0 5 4 11 4z" fill="#3d9410"/></symbol>
<symbol id="k-e" viewBox="0 0 30 30"><circle cx="15" cy="15" r="15" fill="#2fb7c4"/><path d="M15 15L2 7.500A15 15 0 0 1 28 7.500z" fill="#f4503c"/><path d="M15 15L2.500 23A15 15 0 0 1 10 1z" fill="#f7a51e"/><path d="M15 15L28 7.500A15 15 0 0 1 18 30z" fill="#7a70d8"/><circle cx="15" cy="15.500" r="10.500" fill="#1f9fe0" stroke="#eef6fb"/><path d="M9.500 16.500h12.300q.3-7.500-6.300-7.500t-6.500 6.800 6.500 6.700q4 0 6-2.700" fill="none" stroke="#fff" stroke-width="2.600"/></symbol>
<symbol id="k-shield" viewBox="0 0 30 30"><rect width="30" height="30" rx="3" fill="#0f4fff"/><path d="M15 4l10 3v8q0 7-10 12Q5 22 5 15V7z" fill="none" stroke="#fff" stroke-width="2"/><path d="M6 10l9 7 9-7" fill="none" stroke="#fff" stroke-width="2"/></symbol>
<symbol id="k-x" viewBox="0 0 30 30"><path d="M15 14L7 6a11 8 0 0 1 16 0z" fill="#2ad0a8"/><path d="M15 14L7 6q-6 4-6 10 0 4 5 7z" fill="#4aa8ff"/><path d="M15 14l8-8q6 4 6 10 0 4-5 7z" fill="#1f6ff0"/><path d="M15 14l9 9q-3 6-9 6t-9-6z" fill="#1560ff"/><path d="M7 6l17 17M23 6L6 23" stroke="#474747"/></symbol>
<symbol id="k-rec" viewBox="0 0 30 30"><circle cx="15" cy="15" r="13" fill="#111" stroke="#fff" stroke-width="1.500"/><circle cx="15" cy="15" r="7.500" fill="#f03a22"/></symbol>
<symbol id="k-cad" viewBox="0 0 30 30"><path d="M1 2l5-2v22l-5 7z" fill="#f0607c"/><path d="M5 0h20v21H5z" fill="#f7284f"/><path d="M25 1l4 3v25l-4 1z" fill="#8c1730"/><path d="M2 21h25v9H2z" fill="#7d1028"/><path d="M10.500 16L14 4h3l3.500 12h-2.700l-.7-2.500h-3.200L13.200 16zM14.500 11.500h2L15.500 7.500z" fill="#fff"/></symbol>
<symbol id="r-up" viewBox="0 0 20 20"><path d="M2 14l8-8 8 8" fill="none" stroke="#fff" stroke-width="1.300"/></symbol>
<symbol id="r-mic" viewBox="0 0 20 20"><rect x="5.500" y="0" width="9" height="14" rx="1" fill="#fff"/><path d="M3.500 9v5q0 2 2 2h9q2 0 2-2V9M10 16v3M6 19.500h8" fill="none" stroke="#fff"/></symbol>
<symbol id="r-bat" viewBox="0 0 20 20"><path d="M7 5.500h11.500v10H6" fill="none" stroke="#aaa"/><path d="M19 8h1v4h-1z" fill="#aaa"/><path d="M.5 3.500v3q0 2 2 2t2-2v-3zM2.500 8v7M1.500 1v2M3.500 1v2M8 7l6 7M14 7l-6 7" fill="none" stroke="#fff" stroke-width="1.200"/></symbol>
<symbol id="r-net" viewBox="0 0 20 20"><path d="M5 3.500h14.500v10h-16V8M10.500 14v4M7 18.500h8M.5 2.500h4v4h-4zM2.500 6v4" fill="none" stroke="#fff" stroke-width="1.200"/></symbol>
<symbol id="r-vol" viewBox="0 0 20 20"><path d="M.5 7.500h3l4-4v13l-4-4h-3zM10 7q2 3 0 6M13 5q3 5 0 10" fill="none" stroke="#fff"/><path d="M16 3q4 7 0 14" fill="none" stroke="#999"/></symbol>
<symbol id="r-note" viewBox="0 0 20 20"><path d="M.6 1.500h18.800v14.500H13L10 19l-3-3H.6z" fill="none" stroke="#fff" stroke-width="1.200"/></symbol>
<symbol id="sogou" viewBox="0 0 40 40"><path d="M2 7L30 1q3-1 4 2l5 26q1 3-2 4L11 39q-3 1-4-2L0 11q-.5-3 2-4z" fill="url(#sog)"/><path d="M32 9Q12 7 9 14q-1 5 8 6 11 1 10 5-2 5-19 5" fill="none" stroke="#fff" stroke-width="5.500"/></symbol>
<symbol id="g-pun" viewBox="0 0 20 20"><circle cx="6" cy="7" r="2.200" fill="none" stroke="#0f62d8" stroke-width="1.600"/><path d="M12 11.500a2.500 2.500 0 0 1 5 0q0 4-3.500 5.500l-.5-1q1.500-1 1.500-2-2.500 0-2.500-2.500z" fill="#0f62d8"/></symbol>
<symbol id="g-kb" viewBox="0 0 20 20"><rect x="1" y="3" width="18" height="14" rx="2" fill="none" stroke="#0f62d8" stroke-width="2"/><path d="M3 7.500h14M3 11h14M6 4v9M10 4v9M14 4v9M6 14.500h8" stroke="#0f62d8" stroke-width="1.300"/></symbol>
<symbol id="g-shirt" viewBox="0 0 24 24"><path d="M1 7l6-4q3 3 6 0l6 4-2 5-2-1v11H6V11l-3 1z" fill="url(#shirtg)"/><circle cx="19" cy="4" r="4" fill="#ff6a3c"/></symbol>
<symbol id="g-game" viewBox="0 0 20 20"><path d="M5 2h10q5 2 5 9 0 5-4 3H4q-4 2-4-3 0-7 5-9z" fill="#0f62d8"/><path d="M4 8h5M6.500 5.500v5" stroke="#fff" stroke-width="1.500"/><circle cx="14" cy="8" r="2" fill="#fff"/><path d="M2 17h4M14 17h4" stroke="#0f62d8" stroke-width="2"/></symbol>
<symbol id="g-grid" viewBox="0 0 20 20"><rect x="2" y="2" width="7" height="7" rx="2.500" fill="#0f62d8"/><rect x="12" y="3" width="5.500" height="5.500" rx="2" fill="none" stroke="#0f62d8" stroke-width="2"/><rect x="2" y="11" width="7" height="7" rx="2.500" fill="#0f62d8"/><rect x="11" y="11" width="7" height="7" rx="2.500" fill="#0f62d8"/></symbol>
<symbol id="g-gear" viewBox="0 0 20 20"><path d="M10 1l3 3 5-1-1 5 2 3-2 3 1 4-4-1-4 2-4-2-4 1 1-4-2-3 2-3-1-5 5 1z" fill="#0f62d8"/><path d="M10 8v10M7 12q0-4 3-4t3 4" stroke="#fff" fill="none" stroke-width="1.300"/></symbol>
</svg>

<div class="app">
<header class="titlebar">
  <button class="ib logo" aria-label="应用程序"><svg class="lg"><use href="#logo"/></svg><span class="caret mid"></span></button>
  <div class="quick">
    <button class="ib" aria-label="新建"><svg class="i20"><use href="#new"/></svg></button>
    <button class="ib" aria-label="打开"><svg class="i20"><use href="#open"/></svg></button>
    <button class="ib" aria-label="保存"><svg class="i20"><use href="#save"/></svg></button>
    <button class="ib" aria-label="另存为"><svg class="i20"><use href="#saveas"/></svg></button>
    <button class="ib" aria-label="从设备打开"><svg class="i20"><use href="#mopen"/></svg></button>
    <button class="ib" aria-label="保存到设备"><svg class="i20"><use href="#msave"/></svg></button>
    <button class="ib" aria-label="打印"><svg class="i20"><use href="#print"/></svg></button>
    <button class="ib hist" aria-label="放弃"><svg class="i20"><use href="#undo"/></svg><span class="caret"></span></button>
    <button class="ib hist" aria-label="重做"><svg class="i20"><use href="#redo"/></svg><span class="caret"></span></button>
    <button class="ib" aria-label="自定义"><svg class="i12"><use href="#qmore"/></svg></button>
  </div>
  <button class="ib share"><svg class="i20"><use href="#share"/></svg>共享</button>
  <div class="doc"><span>T20天正建筑软件 V10.0互联版 For Autodesk AutoCAD 2024</span><span>Drawing1.dwg</span></div>
  <span class="playr"></span>
  <input class="find" type="text" placeholder="键入关键字或短语" aria-label="搜索">
  <button class="ib" aria-label="搜索"><svg class="i20"><use href="#search"/></svg></button>
  <button class="ib login"><svg class="i20"><use href="#user"/></svg>登录</button>
  <div class="account">
    <span class="caret"></span>
    <button class="ib" aria-label="商店"><svg class="i18"><use href="#cart"/></svg></button>
    <button class="ib hist" aria-label="Autodesk"><svg class="i20"><use href="#tri"/></svg><span class="caret"></span></button>
    <span class="vr"></span>
    <button class="ib hist" aria-label="帮助"><svg class="i20"><use href="#help"/></svg><span class="caret"></span></button>
  </div>
  <div class="winbtns">
    <button class="ib" aria-label="最小化"><svg class="i14"><use href="#wmin"/></svg></button>
    <button class="ib" aria-label="还原"><svg class="i14"><use href="#wres"/></svg></button>
    <button class="ib" aria-label="关闭"><svg class="i14"><use href="#wclose"/></svg></button>
  </div>
</header>

<nav class="tabs">
  <a class="on" href="#">默认</a><a href="#">插入</a><a href="#">注释</a><a href="#">参数化</a><a href="#">视图</a><a href="#">管理</a><a href="#">输出</a><a href="#">附加模块</a><a href="#">协作</a><a href="#">精选应用</a><a href="#">天正建筑</a><a href="#">Express Tools</a>
  <button class="ib fold" aria-label="折叠功能区"><span class="pill"><span class="up"></span></span><span class="caret"></span></button>
</nav>

<section class="ribbon">
  <div class="panel p-draw">
    <div class="body">
      <button class="big w50"><svg class="i40"><use href="#line"/></svg><span>直线</span></button>
      <button class="big w50"><svg class="i40"><use href="#pline"/></svg><span>多段线</span></button>
      <button class="big w50"><svg class="i40"><use href="#circle"/></svg><span>圆</span><i class="caret"></i></button>
      <button class="big w54"><svg class="i40"><use href="#arc"/></svg><span>圆弧</span><i class="caret"></i></button>
      <div class="col pl8">
        <button class="sm" aria-label="矩形"><svg class="i20"><use href="#rect"/></svg><i class="caret"></i></button>
        <button class="sm" aria-label="椭圆"><svg class="i20"><use href="#ellipse"/></svg><i class="caret"></i></button>
        <button class="sm" aria-label="图案填充"><svg class="i20"><use href="#hatch"/></svg><i class="caret"></i></button>
      </div>
    </div>
    <div class="cap"><span>绘图<i class="caret wide"></i></span></div>
  </div>
  <div class="panel p-mod">
    <div class="body">
      <div class="col w82">
        <button class="sm"><svg class="i20"><use href="#move"/></svg>移动</button>
        <button class="sm"><svg class="i20"><use href="#copy"/></svg>复制</button>
        <button class="sm"><svg class="i20"><use href="#stretch"/></svg>拉伸</button>
      </div>
      <div class="col w74">
        <button class="sm"><svg class="i20"><use href="#rotate"/></svg>旋转</button>
        <button class="sm"><svg class="i20"><use href="#mirror"/></svg>镜像</button>
        <button class="sm"><svg class="i20"><use href="#scale"/></svg>缩放</button>
      </div>
      <div class="col w93">
        <button class="sm"><svg class="i20"><use href="#trim"/></svg>修剪<i class="caret"></i></button>
        <button class="sm"><svg class="i20"><use href="#fillet"/></svg>圆角<i class="caret"></i></button>
        <button class="sm"><svg class="i20"><use href="#array"/></svg>阵列<i class="caret"></i></button>
      </div>
      <div class="col">
        <button class="sm" aria-label="删除"><svg class="i20"><use href="#erase"/></svg></button>
        <button class="sm" aria-label="分解"><svg class="i20"><use href="#explode"/></svg></button>
        <button class="sm" aria-label="偏移"><svg class="i20"><use href="#offset"/></svg></button>
      </div>
    </div>
    <div class="cap"><span>修改<i class="caret wide"></i></span></div>
  </div>
  <div class="panel p-ann">
    <div class="body">
      <button class="big w62"><svg class="i40"><use href="#bigA"/></svg><span>文字</span><i class="caret"></i></button>
      <button class="big w44"><svg class="i40"><use href="#dim"/></svg><span>标注</span></button>
      <div class="col pl7">
        <button class="sm"><svg class="i20"><use href="#linear"/></svg>线性<i class="caret"></i></button>
        <button class="sm"><svg class="i20"><use href="#leader"/></svg>引线<i class="caret"></i></button>
        <button class="sm"><svg class="i20"><use href="#table"/></svg>表格</button>
      </div>
    </div>
    <div class="cap"><span>注释<i class="caret wide"></i></span></div>
  </div>
  <div class="panel p-lay">
    <div class="body">
      <button class="big w52"><svg class="i40"><use href="#layprop"/></svg><span>图层<br>特性</span></button>
      <div class="col grow">
        <div class="combo"><svg class="i14x20"><use href="#bulb"/></svg><svg class="i20"><use href="#sun"/></svg><svg class="i20"><use href="#unlock"/></svg><span class="swatch"></span><select aria-label="图层"><option>0</option></select><i class="caret wide"></i></div>
        <div class="tools">
          <button class="sm" aria-label="关"><svg class="i20"><use href="#lyoff"/></svg></button>
          <button class="sm" aria-label="隔离"><svg class="i20"><use href="#lyiso"/></svg></button>
          <button class="sm" aria-label="冻结"><svg class="i20"><use href="#lyfrz"/></svg></button>
          <button class="sm" aria-label="锁定"><svg class="i20"><use href="#lylock"/></svg></button>
          <button class="sm"><svg class="i20"><use href="#lycur"/></svg>置为当前</button>
        </div>
        <div class="tools">
          <button class="sm" aria-label="打开所有图层"><svg class="i20"><use href="#lyon"/></svg></button>
          <button class="sm" aria-label="取消隔离"><svg class="i20"><use href="#lyun"/></svg></button>
          <button class="sm" aria-label="解冻"><svg class="i20"><use href="#lythaw"/></svg></button>
          <button class="sm" aria-label="解锁"><svg class="i20"><use href="#lyunl"/></svg></button>
          <button class="sm"><svg class="i20"><use href="#lymat"/></svg>匹配图层</button>
        </div>
      </div>
    </div>
    <div class="cap"><span>图层<i class="caret wide"></i></span></div>
  </div>
  <div class="panel p-blk">
    <div class="body">
      <button class="big w54"><svg class="i40"><use href="#insert"/></svg><span>插入</span><i class="caret"></i></button>
      <div class="col">
        <button class="sm"><svg class="i20"><use href="#bcreate"/></svg>创建</button>
        <button class="sm"><svg class="i20"><use href="#bedit"/></svg>编辑</button>
        <button class="sm"><svg class="i20"><use href="#battr"/></svg>编辑属性<i class="caret"></i></button>
      </div>
    </div>
    <div class="cap"><span>块<i class="caret wide"></i></span></div>
  </div>
  <div class="panel p-prop">
    <div class="body">
      <button class="big w52"><svg class="i40"><use href="#match"/></svg><span>特性<br>匹配</span></button>
      <div class="col grow">
        <label class="prop"><svg class="i20"><use href="#wheel"/></svg><span class="combo"><span class="swatch"></span><select aria-label="颜色"><option>ByLayer</option></select><i class="caret wide"></i></span></label>
        <label class="prop"><svg class="i20"><use href="#lwt"/></svg><span class="combo tight"><span class="ln"></span><select aria-label="线宽"><option>ByLayer</option></select><i class="caret wide"></i></span></label>
        <label class="prop"><svg class="i20"><use href="#ltp"/></svg><span class="combo tight"><span class="ln"></span><select aria-label="线型"><option>ByLayer</option></select><i class="caret wide"></i></span></label>
      </div>
    </div>
    <div class="cap"><span>特性<i class="caret wide"></i></span><button class="ib" aria-label="特性选项"><svg class="i10"><use href="#launch"/></svg></button></div>
  </div>
  <div class="panel p-grp">
    <div class="body">
      <button class="big w52"><svg class="i40"><use href="#group"/></svg><span>组</span></button>
      <div class="col">
        <button class="sm sq" aria-label="解除编组"><svg class="i20"><use href="#ungrp"/></svg></button>
        <button class="sm sq" aria-label="组编辑"><svg class="i20"><use href="#gedit"/></svg></button>
        <button class="sm sq lit" aria-label="组选择"><svg class="i20"><use href="#gsel"/></svg></button>
      </div>
    </div>
    <div class="cap"><span>组<i class="caret wide"></i></span></div>
  </div>
  <div class="panel p-util">
    <div class="body">
      <button class="big w62"><svg class="i40"><use href="#ruler"/></svg><span>测量</span><i class="caret"></i></button>
      <div class="col pl3">
        <button class="sm" aria-label="快速选择"><svg class="i20"><use href="#qsel"/></svg></button>
        <button class="sm" aria-label="全部选择"><svg class="i20"><use href="#sall"/></svg></button>
        <button class="sm" aria-label="计算器"><svg class="i20"><use href="#calc"/></svg></button>
      </div>
    </div>
    <div class="cap"><span>实用工具<i class="caret wide"></i></span></div>
  </div>
  <div class="panel p-clip">
    <div class="body">
      <button class="big w62"><svg class="i40"><use href="#paste"/></svg><span>粘贴</span><i class="caret"></i></button>
      <div class="col pl3">
        <button class="sm" aria-label="剪切"><svg class="i20"><use href="#cut"/></svg><i class="caret"></i></button>
        <button class="sm" aria-label="复制剪裁"><svg class="i20"><use href="#cpy"/></svg><i class="caret"></i></button>
      </div>
    </div>
    <div class="cap"><span>剪贴板</span></div>
  </div>
  <div class="panel p-view">
    <div class="body">
      <button class="big w74"><svg class="i40"><use href="#base"/></svg><span>基点</span><i class="caret"></i></button>
    </div>
    <div class="cap"><span>视图<i class="caret wide"></i></span><button class="ib" aria-label="视图选项"><svg class="i10"><use href="#launch"/></svg></button></div>
  </div>
</section>

<main class="work">
  <aside class="side">
    <div class="sidehead"><span class="grip"></span>T2...</div>
    <div class="menu">
      <ul>
        <li><button><svg class="i16"><use href="#s-r"/></svg>设　　置</button></li>
        <li><button><svg class="i16"><use href="#s-r"/></svg>轴网柱子</button></li>
        <li><button><svg class="i16"><use href="#s-r"/></svg>墙　　体</button></li>
        <li><button><svg class="i16"><use href="#s-r"/></svg>门　　窗</button></li>
        <li><button><svg class="i16"><use href="#s-r"/></svg>房　　间</button></li>
        <li><button><svg class="i16"><use href="#s-r"/></svg>屋　　顶</button></li>
        <li><button><svg class="i16"><use href="#s-r"/></svg>楼梯其他</button></li>
        <li><button><svg class="i16"><use href="#s-r"/></svg>立　　面</button></li>
        <li><button><svg class="i16"><use href="#s-r"/></svg>剖　　面</button></li>
        <li><button><svg class="i16"><use href="#s-r"/></svg>文字表格</button></li>
        <li><button><svg class="i16"><use href="#s-r"/></svg>尺寸标注</button></li>
        <li><button><svg class="i16"><use href="#s-r"/></svg>符号标注</button></li>
        <li><button><svg class="i16"><use href="#s-r"/></svg>图层控制</button></li>
        <li><button><svg class="i16"><use href="#s-r"/></svg>工　　具</button></li>
        <li><button><svg class="i16"><use href="#s-d"/></svg>图块图案</button></li>
      </ul>
      <hr class="full">
      <ul>
        <li><button><svg class="i16"><use href="#s-lib"/></svg>通用图库</button></li>
        <li><button><svg class="i16"><use href="#s-film"/></svg>幻灯管理</button></li>
        <li><button><svg class="i16"><use href="#s-lib"/></svg>构 件 库</button></li>
        <li><button><svg class="i16"><use href="#s-in"/></svg>构件入库</button></li>
      </ul>
      <hr>
      <ul>
        <li><button><svg class="i16"><use href="#s-quick"/></svg>快速建块</button></li>
        <li><button><svg class="i16"><use href="#s-conv"/></svg>图块转化</button></li>
        <li><button><svg class="i16"><use href="#s-rep"/></svg>图块替换</button></li>
        <li><button><svg class="i16"><use href="#s-ext"/></svg>块内提取</button></li>
        <li><button><svg class="i16"><use href="#s-exp"/></svg>炸嵌套块</button></li>
        <li><button><svg class="i16"><use href="#s-g"/></svg>多视图块</button></li>
      </ul>
      <hr>
      <ul>
        <li><button><svg class="i16"><use href="#s-clip"/></svg>参照裁剪</button></li>
        <li><button><svg class="i16"><use href="#s-lay"/></svg>图块改层</button></li>
        <li><button><svg class="i16"><use href="#s-name"/></svg>图块改名</button></li>
        <li><button><svg class="i16"><use href="#s-base"/></svg>改块基点</button></li>
        <li><button><svg class="i16"><use href="#s-txt"/></svg>改块内字</button></li>
        <li><button><svg class="i16"><use href="#s-inc"/></svg>块内增减</button></li>
        <li><button><svg class="i16"><use href="#s-ord"/></svg>块内次序</button></li>
      </ul>
      <hr>
      <ul>
        <li><button><svg class="i16"><use href="#s-any"/></svg>任意屏蔽</button></li>
        <li><button><svg class="i16"><use href="#s-rec"/></svg>矩形屏蔽</button></li>
        <li><button><svg class="i16"><use href="#s-ell"/></svg>精确屏蔽</button></li>
        <li><button><svg class="i16"><use href="#s-can"/></svg>取消屏蔽</button></li>
        <li><button><svg class="i16"><use href="#s-on"/></svg>屏蔽框开</button></li>
        <li><button><svg class="i16"><use href="#s-off"/></svg>屏蔽框关</button></li>
      </ul>
      <hr>
    </div>
  </aside>
  <section class="canvas">
    <div class="vptop">
      <span>[−][俯视][二维线框]</span>
      <svg class="vpwin" viewBox="0 0 62 14"><path d="M0 9h13v4H0z" fill="#e8e8e8"/><path d="M28 0h11v10h-3V4h-8z" fill="#c4c4c4"/><path d="M25 3h11v10H25zM29 7v2h3V7z" fill="#f0f0f0" fill-rule="evenodd"/><path d="M50 1h4l2 3 2-3h4l-4 6 4 5h-4l-2-3-2 3h-4l4-5z" fill="#f0f0f0"/></svg>
    </div>
    <svg class="cube" viewBox="0 0 150 190">
      <circle cx="75" cy="73" r="57" fill="none" stroke="#2b2b2b" stroke-width="14"/>
      <rect x="47" y="45" width="56" height="56" fill="#a0a0a0"/><rect x="58" y="56" width="34" height="34" fill="#92949a"/>
      <text x="75" y="86" class="face">上</text>
      <text x="75" y="22" class="dir">北</text><text x="75" y="142" class="dir">南</text><text x="15" y="82" class="dir">西</text><text x="135" y="82" class="dir">东</text>
      <rect x="39" y="167" width="69" height="20" rx="5" fill="#85858f" stroke="#6c6c74"/>
      <text x="45" y="181" class="ucsn">未命名</text><path d="M93 174h9l-4.500 5z" fill="#9c9ca8" stroke="#6c6c74"/>
    </svg>
    <svg class="nav" viewBox="0 0 41 260">
      <rect x=".5" y=".5" width="40" height="258" rx="3" fill="#424242" stroke="#525252"/>
      <path d="M2 69.500h37M4 203.500h33" stroke="#525252"/>
      <g fill="none" stroke="#2b2b2b" stroke-width="1.500"><circle cx="34" cy="7" r="4"/><path d="M32 5l4 4M36 5l-4 4"/><circle cx="34" cy="252" r="4"/><path d="M32 251.500h4M32 253.500h4"/>
      <path d="M8 36q0-14 14-14h12v14q0 13-13 13T8 36z"/><circle cx="21" cy="35" r="8"/><path d="M11 43l5-3M31 43l-5-3"/>
      <path d="M14 101q-2-6-8-12 1-4 7 1l2 2-2-13q2-3 4 0l2 8-1-13q3-3 5 0v13l3-11q3-1 3 1l-1 12 3-6q3-1 3 1-1 6-3 11-2 5-4 7z"/>
      <path d="M8 112l17 17M25 112L8 129"/><circle cx="26" cy="129" r="6"/><path d="M30 133l6 6" stroke-width="3"/><path d="M6 110h4v4H6zM22 110h4v4h-4zM6 125h4v4H6z" fill="#2b2b2b"/>
      <path d="M18 183v-22h-3l6-6 5 6h-2v22z"/><ellipse cx="21" cy="172" rx="14" ry="5"/><path d="M16 173l-5 3 5 3z" fill="#2b2b2b"/>
      <path d="M6.500 208.500h7v8h-7zM17 208.500h7v8h-7zM27 208.500h7v8h-7zM6.500 220.500h20v16h-20z"/><path d="M13 224l7 4-7 5z" fill="#2b2b2b"/></g>
      <path d="M18 60h6l-3 3zM18 147h6l-3 3zM18 194h6l-3 3z" fill="#222"/>
    </svg>
    <svg class="ucs" viewBox="0 0 100 100"><path d="M10.500 24v68M10 86.500h63" stroke="#e4e4e4"/><path d="M5.500 80.500h11v11h-11z" fill="none" stroke="#e4e4e4"/><text x="19" y="20">Y</text><text x="83" y="85">X</text></svg>
    <div class="cmdline">
      <span class="cgrip"></span>
      <button class="ib" aria-label="关闭命令行"><svg class="i12" viewBox="0 0 12 12"><path d="M1 1l10 10M11 1L1 11" stroke="#b8babd" stroke-width="2.500"/></svg></button>
      <button class="ib" aria-label="自定义"><svg class="i20"><use href="#wrench"/></svg></button>
      <div class="cin"><svg class="i20"><use href="#cmd"/></svg><i class="caret dark"></i><input type="text" placeholder="键入命令" aria-label="命令"><i class="up dark"></i></div>
    </div>
    <div class="ime">
      <svg class="i40 slogo"><use href="#sogou"/></svg>
      <button class="ib zh">中</button>
      <button class="ib" aria-label="标点"><svg class="i20"><use href="#g-pun"/></svg></button>
      <button class="ib" aria-label="键盘"><svg class="i20"><use href="#g-kb"/></svg></button>
      <button class="ib" aria-label="皮肤"><svg class="i24"><use href="#g-shirt"/></svg></button>
      <button class="ib" aria-label="游戏"><svg class="i20"><use href="#g-game"/></svg></button>
      <button class="ib" aria-label="工具箱"><svg class="i20"><use href="#g-grid"/></svg></button>
      <button class="ib" aria-label="设置"><svg class="i20"><use href="#g-gear"/></svg></button>
    </div>
  </section>
</main>

<nav class="layouts">
  <button class="ib" aria-label="布局菜单"><svg class="i20"><use href="#burger"/></svg></button>
  <a href="#">模型</a><a href="#">布局1</a><a href="#">布局2</a>
  <button class="ib" aria-label="新建布局"><svg class="i20"><use href="#plus"/></svg></button>
  <svg class="slash" viewBox="0 0 10 20"><path d="M9 0L1 20" stroke="#5a6370"/></svg>
</nav>

<footer class="status">
  <div class="cell coord"></div>
  <div class="join grow">
    <button class="cell ratio">比例 1:100<i class="caret wide"></i></button>
    <div class="cell grow dots">...</div>
  </div>
  <button class="cell model">模型</button>
  <div class="cell"><button class="sb" aria-label="栅格"><svg class="i20"><use href="#t-grid"/></svg></button><button class="sb" aria-label="捕捉"><svg class="i20"><use href="#t-dots"/></svg></button><button class="sc" aria-label="捕捉选项"><i class="caret wide"></i></button></div>
  <div class="join">
    <div class="cell"><button class="sb" aria-label="推断约束"><svg class="i20"><use href="#t-inf"/></svg></button></div>
    <div class="cell"><button class="sb on" aria-label="动态输入"><svg class="i20"><use href="#t-dyn"/></svg></button></div>
    <div class="cell"><button class="sb" aria-label="正交"><svg class="i20"><use href="#t-ortho"/></svg></button><button class="sb" aria-label="极轴"><svg class="i20"><use href="#t-polar"/></svg></button><button class="sc" aria-label="极轴选项"><i class="caret wide"></i></button><button class="sb" aria-label="等轴测"><svg class="i20"><use href="#t-iso"/></svg></button><button class="sc" aria-label="等轴测选项"><i class="caret wide"></i></button></div>
    <div class="cell"><button class="sb on" aria-label="对象捕捉追踪"><svg class="i20"><use href="#t-trk"/></svg></button></div>
    <div class="cell"><button class="sb on" aria-label="对象捕捉"><svg class="i20"><use href="#t-osn"/></svg></button><button class="sc" aria-label="对象捕捉选项"><i class="caret wide"></i></button></div>
    <div class="cell"><button class="sb" aria-label="线宽"><svg class="i20"><use href="#t-lw"/></svg></button></div>
    <div class="cell"><button class="sb on" aria-label="透明度"><svg class="i20"><use href="#t-tr"/></svg></button></div>
    <div class="cell"><button class="sb" aria-label="选择循环"><svg class="i20"><use href="#t-cyc"/></svg></button></div>
    <div class="cell"><button class="sb" aria-label="三维对象捕捉"><svg class="i20"><use href="#t-3d"/></svg></button><button class="sc" aria-label="三维捕捉选项"><i class="caret wide"></i></button></div>
  </div>
  <div class="cell"><button class="sb on" aria-label="动态 UCS"><svg class="i20"><use href="#t-ucs"/></svg></button><button class="sb" aria-label="选择过滤"><svg class="i20"><use href="#t-flt"/></svg></button><button class="sc" aria-label="过滤选项"><i class="caret wide"></i></button><button class="sb on" aria-label="小控件"><svg class="i20"><use href="#t-giz"/></svg></button><button class="sc" aria-label="小控件选项"><i class="caret wide"></i></button></div>
  <div class="cell"><button class="sb on" aria-label="注释可见性"><svg class="i20"><use href="#t-a1"/></svg></button><button class="sb" aria-label="自动缩放"><svg class="i20"><use href="#t-a2"/></svg></button><button class="sb" aria-label="注释比例"><svg class="i20"><use href="#t-ann"/></svg></button><button class="zoomv">1:1 / 100%<i class="caret wide"></i></button></div>
  <div class="join">
    <div class="cell"><button class="sb" aria-label="切换工作空间"><svg class="i20"><use href="#t-gear"/></svg></button><button class="sc" aria-label="工作空间选项"><i class="caret wide"></i></button></div>
    <div class="cell"><button class="sb" aria-label="注释监视器"><svg class="i20"><use href="#plus"/></svg></button></div>
  </div>
  <div class="join">
    <label class="cell units"><svg class="i20"><use href="#t-rul"/></svg><select aria-label="单位"><option>小数</option></select><i class="caret wide"></i></label>
    <div class="cell"><button class="sb" aria-label="快捷特性"><svg class="i20"><use href="#t-prop"/></svg></button></div>
  </div>
  <div class="join">
    <div class="cell"><button class="sb" aria-label="锁定用户界面"><svg class="i20"><use href="#t-lock"/></svg></button><button class="sc" aria-label="锁定选项"><i class="caret wide"></i></button></div>
    <div class="cell"><button class="sb" aria-label="隔离对象"><svg class="i20"><use href="#t-shp"/></svg></button><button class="sb" aria-label="编组"><svg class="i20"><use href="#t-iso2"/></svg></button><button class="sb" aria-label="基线"><svg class="i20"><use href="#t-l1"/></svg></button><button class="sb" aria-label="填充"><svg class="i20"><use href="#t-l2"/></svg></button><button class="sb" aria-label="加粗"><svg class="i20"><use href="#t-l3"/></svg></button><button class="sb" aria-label="动态标注"><svg class="i20"><use href="#t-l4"/></svg></button></div>
  </div>
  <div class="cell"><button class="sb on" aria-label="硬件加速"><svg class="i20"><use href="#t-hw"/></svg></button></div>
  <div class="cell sliver"></div>
  <div class="cell"><button class="sb" aria-label="全屏显示"><svg class="i20"><use href="#t-full"/></svg></button></div>
  <div class="cell"><button class="sb" aria-label="自定义"><svg class="i20"><use href="#burger"/></svg></button></div>
</footer>
</div>

<div class="taskbar">
  <button class="start" aria-label="开始"><svg class="i20"><use href="#k-win"/></svg></button>
  <button class="task run multi" aria-label="文件资源管理器"><svg class="i30"><use href="#k-fold"/></svg></button>
  <button class="task run" aria-label="浏览器"><svg class="i30"><use href="#k-wps"/></svg></button>
  <button class="task" aria-label="极速浏览器"><svg class="i30"><use href="#k-e"/></svg></button>
  <button class="task run" aria-label="电脑管家"><svg class="i30"><use href="#k-shield"/></svg></button>
  <button class="task run" aria-label="应用"><svg class="i30"><use href="#k-x"/></svg></button>
  <button class="task run" aria-label="录屏"><svg class="i30"><use href="#k-rec"/></svg></button>
  <button class="task run cur" aria-label="AutoCAD"><svg class="i30" viewBox="0 0 30 30"><use href="#k-cad"/><text x="14" y="28" class="cadt">CAD</text></svg></button>
  <div class="tray">
    <button class="ib" aria-label="隐藏的图标"><svg class="i20"><use href="#r-up"/></svg></button>
    <button class="ib" aria-label="麦克风"><svg class="i20"><use href="#r-mic"/></svg></button>
    <button class="ib" aria-label="电源"><svg class="i20"><use href="#r-bat"/></svg></button>
    <button class="ib" aria-label="网络"><svg class="i20"><use href="#r-net"/></svg></button>
    <button class="ib" aria-label="音量"><svg class="i20"><use href="#r-vol"/></svg></button>
    <button class="ib lang">中</button>
    <button class="ib wideb" aria-label="输入法"><svg class="i20"><use href="#sogou"/></svg></button>
    <button class="clock"><span>9:08</span><span>2024/5/20</span></button>
    <button class="ib note" aria-label="通知"><svg class="i20"><use href="#r-note"/></svg></button>
    <span class="peek"></span>
  </div>
</div>
</body>
</html>
```
FILE: styles.css
```css
* { box-sizing: border-box; }
:root {
  --dark: #212830;
  --panel: #3b4453;
  --line: #222a35;
  --field: #4a586e;
  --hot: #5488c4;
  --fg: #f2f3f4;
  --ic: #d4d6d9;
}
html, body { height: 100%; margin: 0; }
body {
  display: flex;
  flex-direction: column;
  overflow: hidden;
  background: #000;
  color: var(--fg);
  font: 15px/20px "Noto Sans", "Noto Sans CJK SC", sans-serif;
}
button, input, select { font: inherit; color: inherit; background: none; border: 0; padding: 0; margin: 0; }
button { white-space: nowrap; }
a { color: inherit; text-decoration: none; }
ul { list-style: none; margin: 0; padding: 0; }
i { font-style: normal; }
svg { display: block; flex: none; }
select { appearance: none; outline: 0; }
.defs { position: absolute; width: 0; height: 0; }
.i10 { width: 10px; height: 10px; }
.i12 { width: 12px; height: 12px; }
.i14 { width: 14px; height: 14px; }
.i14x20 { width: 14px; height: 20px; }
.i16 { width: 16px; height: 16px; }
.i18 { width: 18px; height: 18px; }
.i20 { width: 20px; height: 20px; }
.i24 { width: 24px; height: 24px; }
.i30 { width: 30px; height: 30px; }
.i40 { width: 40px; height: 40px; }
.grow { flex: 1; min-width: 0; }
.caret { flex: none; width: 0; height: 0; border: 3px solid transparent; border-top: 4px solid var(--ic); border-bottom: 0; }
.caret.mid { border-width: 6px 4px 0; }
.caret.wide { border-width: 5px 5px 0; }
.caret.dark { border-width: 5px 5px 0; border-top-color: #444; }
.up { width: 0; height: 0; border: 3px solid transparent; border-bottom: 4px solid #555; border-top: 0; }
.up.dark { border-width: 0 5px 5px; border-bottom-color: #444; }
.ib { display: flex; align-items: center; justify-content: center; }

.app { flex: 1; min-height: 0; display: flex; flex-direction: column; border-right: 1px solid #1c3f96; background: var(--panel); }

.titlebar { display: flex; align-items: center; height: 40px; padding: 0 0 6px 18px; background: var(--dark); }
.logo { gap: 3px; }
.lg { width: 32px; height: 30px; }
.quick { display: flex; align-items: center; gap: 10px; margin-left: 14px; }
.hist { gap: 9px; }
.share { gap: 6px; margin-left: 8px; color: #8cc8f7; }
.doc { flex: 1; display: flex; justify-content: center; gap: 17px; white-space: nowrap; }
.playr { border: 5px solid transparent; border-left: 5px solid var(--ic); border-right: 0; }
.find { width: 224px; height: 26px; margin: 0 5px 0 9px; padding: 0 3px; background: #454f61; font-size: 14px; font-style: italic; }
.find::placeholder { color: #b0b6bf; opacity: 1; }
.login { gap: 7px; margin-left: 9px; }
.account { display: flex; align-items: center; gap: 11px; margin-left: 77px; }
.vr { width: 1px; height: 22px; margin: 0 1px; background: #4c535c; }
.winbtns { display: flex; margin-left: 26px; }
.winbtns .ib { width: 58px; height: 32px; }

.tabs { display: flex; height: 25px; padding-left: 3px; background: var(--dark); color: #b4b8bd; }
.tabs a { padding: 2px 12px 0; white-space: nowrap; }
.tabs a.on { background: var(--panel); color: #fff; }
.fold { gap: 6px; margin-left: 26px; }
.pill { display: grid; place-items: center; width: 19px; height: 9px; background: #f0f0f0; }

.ribbon { display: flex; height: 125px; padding-left: 1px; border-bottom: 1px solid var(--line); background: var(--panel); }
.panel { flex: none; display: flex; flex-direction: column; border-right: 1px solid var(--line); }
.p-draw { width: 264px; }
.p-draw .body { padding-left: 2px; }
.p-mod { width: 284px; }
.p-mod .body { padding-left: 7px; }
.p-ann { width: 196px; }
.p-lay { width: 315px; }
.p-blk { width: 168px; }
.p-blk .body, .p-prop .body { padding-left: 1px; }
.p-prop { width: 305px; }
.p-grp { width: 85px; }
.p-util { width: 95px; }
.p-clip { width: 110px; }
.p-view { flex: 1; border-right: 0; }
.body { flex: 1; display: flex; align-items: flex-start; }
.big { display: flex; flex-direction: column; align-items: center; padding-top: 7px; }
.big span { margin-top: 5px; }
.big .caret { margin-top: 4px; }
.w44 { width: 44px; }
.w50 { width: 50px; }
.w52 { width: 52px; }
.w54 { width: 54px; }
.w62 { width: 62px; }
.w74 { width: 74px; }
.w82 { width: 75px; }
.w93 { width: 93px; }
.pl3 { padding-left: 3px; }
.pl7 { padding-left: 7px; }
.pl8 { padding-left: 8px; }
.col { display: grid; grid-auto-rows: 31px; padding-top: 4px; }
.sm { display: flex; align-items: center; gap: 7px; height: 31px; }
.sm .caret { margin-left: 4px; }
.p-mod .caret:not(.wide) { margin-left: 7px; }
.sq { width: 29px; justify-content: center; }
.lit { height: 29px; align-self: center; background: #35567a; border: 1px solid #7cc3f8; }
.tools { display: flex; gap: 10px; padding-left: 3px; }
.combo { flex: 1; display: flex; align-items: center; gap: 6px; height: 29px; margin: 1px 2px 1px 0; padding: 0 1px 0 7px; background: var(--field); border: 1px solid var(--line); }
.combo.tight { gap: 2px; }
.combo select { flex: 1; min-width: 0; }
.combo .ln { width: 80px; height: 1px; background: #fff; }
.swatch { width: 20px; height: 20px; background: #fff; border: 1px solid #d8d0c8; }
.prop { display: flex; align-items: center; gap: 3px; }
.cap { display: grid; grid-template-columns: 1fr auto 1fr; align-items: center; height: 26px; padding: 2px 4px 0; }
.cap span { grid-column: 2; display: flex; align-items: center; gap: 8px; }
.cap .ib { justify-self: end; }
.p-view .cap { display: flex; gap: 8px; }

.work { flex: 1; min-height: 0; display: flex; padding: 5px 0; }
.side { display: flex; flex-direction: column; width: 106px; margin: 3px 5px 9px 0; color: #000; }
.sidehead { display: flex; align-items: center; gap: 7px; height: 27px; margin-bottom: 5px; padding: 0 0 2px 9px; background: #2a303c; border-radius: 3px 3px 0 0; color: #e8e8e8; }
.grip { width: 4px; height: 10px; background: repeating-linear-gradient(#aaa 0 1px, transparent 1px 2px); }
.menu { flex: 1; min-height: 0; overflow: hidden; padding-top: 2px; background: #f0f0f0; }
.menu button { display: flex; align-items: center; gap: 9px; width: 100%; height: 18px; padding-left: 3px; line-height: 18px; text-align: left; }
.menu hr { height: 1px; margin: 3px 0 2px 3px; border: 0; background: #9a9a9a; }
.menu hr.full { height: 2px; margin: 0 0 2px; background: #777; }

.canvas { flex: 1; position: relative; background: #000; }
.vptop { display: flex; justify-content: space-between; padding: 5px 12px 0 3px; }
.vptop span { font-family: "Liberation Sans", "Noto Sans CJK SC", sans-serif; font-size: 16px; }
.vpwin { width: 62px; height: 14px; margin-top: 6px; }
.cube { position: absolute; top: 44px; right: 13px; width: 150px; height: 190px; }
.cube text { text-anchor: middle; font-family: "Liberation Serif", "Noto Sans CJK SC", serif; }
.cube .dir { font-size: 20px; fill: #999; }
.cube .face { font-size: 34px; fill: #404248; }
.cube .ucsn { font-size: 14px; fill: #4a4a52; text-anchor: start; }
.nav { position: absolute; top: 262px; right: 2px; width: 41px; height: 260px; }
.ucs { position: absolute; left: 10px; bottom: 7px; width: 100px; height: 100px; }
.ucs text { font: 300 22px "Lato", sans-serif; fill: #e4e4e4; text-anchor: middle; }
.cmdline { position: absolute; left: 363px; right: 363px; bottom: 0; display: flex; align-items: center; height: 34px; padding-left: 5px; background: #22252e; border-radius: 3px 3px 0 0; }
.cgrip { width: 7px; height: 22px; margin-right: 7px; background: radial-gradient(#999 40%, transparent 45%) 0 0 / 4px 4px; }
.cmdline > .ib + .ib { margin-left: 16px; }
.cin { flex: 1; display: flex; align-items: center; gap: 2px; height: 32px; margin-left: 5px; padding: 0 5px; background: #b0b0b0; border-radius: 2px; color: #333; }
.cin input { flex: 1; margin-left: 7px; outline: 0; font-size: 16px; font-style: italic; }
.cin input::placeholder { color: #444; opacity: 1; }
.ime { position: absolute; right: 0; bottom: 32px; display: flex; align-items: center; height: 32px; background: #fff; color: #0f62d8; }
.ime .ib { width: 30px; }
.slogo { margin: 0 1px 4px -34px; }
.zh { font-size: 18px; font-weight: 700; }

.layouts { display: flex; align-items: center; height: 37px; padding: 0 0 7px 20px; background: var(--dark); }
.layouts a { margin-left: 31px; }
.layouts a + .ib { margin-left: 32px; }
.slash { width: 10px; height: 20px; margin-left: 10px; }

.status { display: flex; gap: 3px; height: 33px; padding: 0 1px 3px 2px; background: var(--dark); font-family: "Roboto", "Noto Sans CJK SC", sans-serif; }
.join { display: flex; gap: 1px; }
.cell { display: flex; align-items: center; height: 30px; background: var(--panel); white-space: nowrap; }
.coord { width: 213px; margin-right: 2px; }
.ratio { justify-content: space-between; width: 86px; padding: 0 5px 0 1px; }
.dots { justify-content: flex-end; padding-right: 7px; }
.model { justify-content: flex-end; width: 34px; }
.sb { display: grid; place-items: center; width: 30px; height: 30px; }
.sb.on { height: 28px; background: var(--hot); }
.sc { display: grid; place-items: center; width: 20px; height: 30px; }
.zoomv { display: flex; align-items: center; justify-content: space-between; width: 91px; padding: 0 5px; }
.units { width: 121px; padding: 0 5px; }
.units select { flex: 1; min-width: 0; margin-left: 10px; }
.sliver { width: 4px; }

.taskbar { display: flex; height: 50px; background: #474747; }
.start { display: grid; place-items: center; width: 60px; margin-right: 3px; }
.task { display: grid; place-items: center; width: 61px; margin-right: 1px; }
.run { background: linear-gradient(#76b0e5, #76b0e5) center bottom / 51px 3px no-repeat; }
.multi { background: linear-gradient(90deg, #76b0e5 40px, #5c83a8 40px) center bottom / 51px 3px no-repeat; }
.cur { background: linear-gradient(#76b0e5, #76b0e5) left bottom / 100% 3px no-repeat #6f6f6f; }
.cadt { font: 700 7px "Open Sans", sans-serif; fill: #fff; text-anchor: middle; }
.tray { display: flex; align-items: center; margin-left: auto; }
.tray .ib { width: 30px; }
.lang { font-size: 17px; }
.tray .wideb { width: 42px; }
.clock { display: flex; flex-direction: column; gap: 3px; align-items: center; width: 98px; padding-bottom: 2px; }
.tray .note { width: 24px; margin-left: 10px; }
.peek { width: 6px; height: 50px; margin-left: 23px; border-left: 1px solid #8a8a8a; }
```
